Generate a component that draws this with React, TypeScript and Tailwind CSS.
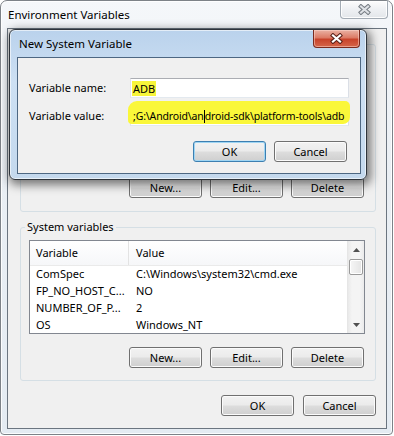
import React from "react";

function CloseGlyph({ fill, stroke }: { fill: string; stroke: string }) {
  return (
    <svg width="13" height="11" viewBox="0 0 13 11">
      <path d="M3 2.5 L10 8.5 M10 2.5 L3 8.5" stroke={stroke} strokeWidth="4.2" strokeLinecap="square" />
      <path d="M3 2.5 L10 8.5 M10 2.5 L3 8.5" stroke={fill} strokeWidth="2.2" strokeLinecap="square" />
    </svg>
  );
}

function WinButton({ label, isDefault }: { label: string; isDefault?: boolean }) {
  return (
    <button
      type="button"
      className={`w-[73px] h-[21px] shrink-0 rounded-[3px] border ${
        isDefault
          ? "border-[#3c7fb1] shadow-[inset_0_0_0_1px_#9fd5f3]"
          : "border-[#707070] shadow-[inset_0_0_0_1px_#fbfbfb]"
      } bg-[linear-gradient(to_bottom,#f2f2f2_0%,#ebebeb_48%,#dddddd_52%,#cfcfcf_100%)] flex items-center justify-center text-[11px] leading-none text-black`}
    >
      {label}
    </button>
  );
}

function Tri({ down }: { down?: boolean }) {
  return (
    <svg width="7" height="4" viewBox="0 0 7 4">
      <path d={down ? "M0 0 L7 0 L3.5 4 Z" : "M0 4 L3.5 0 L7 4 Z"} fill="#505050" />
    </svg>
  );
}

function Scrollbar() {
  return (
    <div className="w-[17px] shrink-0 flex flex-col border-l border-[#e6e6e6] bg-[linear-gradient(to_right,#e9e9e9,#f4f4f4_25%,#f4f4f4_75%,#ebebeb)]">
      <div className="h-[17px] flex items-center justify-center">
        <Tri />
      </div>
      <div className="mt-[1px] h-[16px] mx-[1px] rounded-[2px] border border-[#9a9a9a] bg-[linear-gradient(to_right,#f6f6f6,#e4e4e4)] shadow-[inset_0_0_0_1px_#ffffff]" />
      <div className="flex-1" />
      <div className="h-[17px] flex items-center justify-center">
        <Tri down />
      </div>
    </div>
  );
}

const rows: [string, string][] = [
  ["ComSpec", "C:\\Windows\\system32\\cmd.exe"],
  ["FP_NO_HOST_C...", "NO"],
  ["NUMBER_OF_P...", "2"],
  ["OS", "Windows_NT"],
];

function ListView({ height, data, header }: { height: string; data: [string, string][]; header?: boolean }) {
  return (
    <div className={`${height} border border-[#828790] bg-white flex overflow-hidden`}>
      <div className="flex-1 flex flex-col">
        {header && (
          <div className="h-[25px] shrink-0 flex border-b border-[#eaeaea] bg-[linear-gradient(to_bottom,#ffffff,#f6f7f9)]">
            <div className="w-[99px] pl-[6px] border-r border-[#e3e3e3] flex items-center">Variable</div>
            <div className="pl-[7px] flex items-center">Value</div>
          </div>
        )}
        {data.map(([k, v]) => (
          <div key={k} className="h-[17px] shrink-0 flex items-center">
            <div className="w-[99px] pl-[6px] whitespace-nowrap">{k}</div>
            <div className="pl-[7px] whitespace-nowrap">{v}</div>
          </div>
        ))}
      </div>
      <Scrollbar />
    </div>
  );
}

function ButtonRow() {
  return (
    <div className="flex justify-end gap-[8px] pr-[1px]">
      <WinButton label="New..." />
      <WinButton label="Edit..." />
      <WinButton label="Delete" />
    </div>
  );
}

export default function App() {
  return (
    <div className="w-[394px] h-[436px] bg-white relative overflow-hidden font-['Noto_Sans',sans-serif] text-[11px] text-black">
      {/* Outer window */}
      <div className="w-[393px] h-[435px] rounded-t-[7px] rounded-b-[4px] border border-[#7d8288] bg-[linear-gradient(to_bottom,#f5f7fa,#eaeff4_40%,#e4ebf2)] shadow-[inset_0_0_0_1px_rgba(255,255,255,0.85)] flex flex-col">
        <div className="h-[27px] flex justify-between items-start shrink-0">
          <span className="mt-[6px] ml-[7px] leading-[16px] text-[11.5px]">Environment Variables</span>
          <div className="mr-[4px] w-[48px] h-[18px] rounded-b-[4px] border border-t-0 border-[#a3abb4] bg-[linear-gradient(to_bottom,#fdfdfd,#eef0f3_50%,#e3e6ea)] shadow-[inset_0_0_0_1px_rgba(255,255,255,0.9)] flex items-center justify-center">
            <CloseGlyph fill="#dfe2e6" stroke="#767c83" />
          </div>
        </div>
        <div className="px-[6px]">
          <div className="w-[380px] h-[401px] border border-[#6b7580] bg-[#f0f0f0] flex flex-col">
            {/* User variables group (covered by the dialog) */}
            <div className="ml-[12px] mt-[15px] w-[356px] border border-[#d5dfe5] rounded-[3px] pl-[8px] pr-[10px] pt-[12px] pb-[13px] flex flex-col">
              <ListView height="h-[107px]" data={[]} />
              <div className="mt-[13px]">
                <ButtonRow />
              </div>
            </div>
            {/* System variables group */}
            <fieldset className="ml-[12px] mt-[7px] w-[356px] border border-[#d5dfe5] rounded-[3px] p-0">
              <legend className="ml-[4px] px-[2px] leading-[16px]">System variables</legend>
              <div className="pl-[8px] pr-[10px] pt-[5px] pb-[12px] flex flex-col">
                <ListView height="h-[94px]" data={rows} header />
                <div className="mt-[13px]">
                  <ButtonRow />
                </div>
              </div>
            </fieldset>
            <div className="mt-[14px] pr-[10px] flex justify-end gap-[9px]">
              <WinButton label="OK" />
              <WinButton label="Cancel" />
            </div>
          </div>
        </div>
      </div>

      {/* New System Variable dialog (overlapping window) */}
      <div className="absolute left-[9px] top-[29px] w-[358px] h-[151px] rounded-[6px] border border-[#2e343b] bg-[linear-gradient(to_bottom,#bad2ec,#cde0f3_35%,#c4d9ee)] shadow-[2px_3px_10px_2px_rgba(0,0,0,0.5),inset_0_0_0_1px_rgba(255,255,255,0.6)] flex flex-col">
        <div className="h-[27px] shrink-0 flex justify-between items-start">
          <span className="mt-[6px] ml-[9px] leading-[16px] text-[11.5px]">New System Variable</span>
          <div className="mr-[6px] w-[47px] h-[18px] rounded-b-[4px] border border-t-0 border-[#7a2a1e] bg-[linear-gradient(to_bottom,#eab2a4,#dc7b66_45%,#c8432b_55%,#d5664a)] shadow-[inset_0_0_0_1px_rgba(255,220,210,0.5)] flex items-center justify-center">
            <CloseGlyph fill="#ffffff" stroke="#5a2018" />
          </div>
        </div>
        <div className="pl-[7px] pr-[5px]">
          <div className="w-[344px] h-[117px] border border-[#4d6782] bg-[#f0f0f0] flex flex-col pt-[20px] pl-[11px] pr-[11px]">
            <div className="flex items-center">
              <div className="w-[101px]">Variable name:</div>
              <div className="w-[219px] h-[20px] border border-[#abadb3] border-l-[#e2e3ea] border-r-[#dbdfe6] border-b-[#e3e9ef] bg-white flex items-center pl-[1px]">
                <span className="bg-[#f7f53a] px-[1px] leading-[15px]">ADB</span>
              </div>
            </div>
            <div className="flex items-center mt-[8px]">
              <div className="w-[101px]">Variable value:</div>
              <div className="relative w-[219px] h-[20px] border border-[#abadb3] border-l-[#e2e3ea] border-r-[#dbdfe6] border-b-[#e3e9ef] bg-white flex items-center pl-[2px]">
                <div className="absolute left-[-3px] right-[-2px] top-[-6px] bottom-[1px] bg-[#faf73a] rounded-[9px_5px_7px_4px]" />
                <span className="relative whitespace-nowrap leading-[15px] text-[10.5px] tracking-[-0.15px]">
                  ;G:\Android\an
                  <span className="inline-block w-[1px] h-[13px] bg-black align-middle" />
                  droid-sdk\platform-tools\adb
                </span>
              </div>
            </div>
            <div className="mt-[15px] flex justify-end gap-[8px] pr-[2px]">
              <WinButton label="OK" isDefault />
              <WinButton label="Cancel" />
            </div>
          </div>
        </div>
      </div>
    </div>
  );
}
